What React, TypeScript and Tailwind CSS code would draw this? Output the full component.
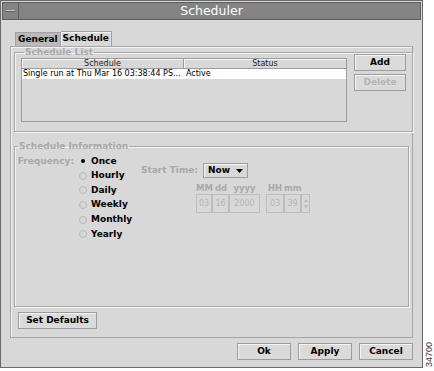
import React from "react";

const F = { fontFamily: '"DejaVu Sans", "Liberation Sans", sans-serif' };

function Btn({ label, w, disabled }: { label: string; w: string; disabled?: boolean }) {
  return (
    <div
      className={`${w} h-[17px] flex items-center justify-center border border-[#9c9c9c] shadow-[inset_1px_1px_0_#f4f4f4] bg-[#dadada] text-[9px] font-bold ${disabled ? "text-[#b4b4b4]" : "text-black"}`}
    >
      {label}
    </div>
  );
}

function Radio({ label, on }: { label: string; on?: boolean }) {
  return (
    <div className="h-[14.6px] flex items-center gap-[4px]">
      <div className={`w-[8px] h-[8px] rounded-full flex items-center justify-center ${on ? "" : "border border-[#b8b8b8]"}`}>
        {on && <div className="w-[4px] h-[4px] rounded-full bg-black" />}
      </div>
      <span className="text-[9px] font-bold text-black">{label}</span>
    </div>
  );
}

function Field({ v, w }: { v: string; w: string }) {
  return (
    <div className={`${w} h-[19px] border border-[#bdbdbd] flex items-center justify-center text-[8px] text-[#b6b6b6]`}>
      {v}
    </div>
  );
}

export default function App() {
  return (
    <div className="w-[434px] h-[371px] bg-white flex" style={F}>
      <div className="w-[423px] h-[368px] border border-[#6a6a6a] bg-[#d8d8d8] flex flex-col">
        {/* title bar */}
        <div className="mx-[1px] mt-[1px] h-[18px] bg-[#848484] border border-[#5e5e5e] flex items-center">
          <div className="w-[16px] h-full border-r border-[#5e5e5e] flex items-center justify-center">
            <div className="w-[9px] h-[2px] bg-[#c8c8c8] border-b border-[#5e5e5e]" />
          </div>
          <div className="flex-1 text-center text-white text-[12.5px] pr-[16px]">Scheduler</div>
        </div>

        {/* tabs */}
        <div className="mt-[11px] ml-[14px] flex items-end h-[15px]">
          <div className="h-[14px] px-[2px] bg-[#b9b9b9] border border-[#a2a2a2] border-b-0 flex items-center text-[9px] font-bold text-black">General</div>
          <div className="h-[15px] px-[2px] bg-[#d8d8d8] border border-[#a2a2a2] border-b-0 border-l-0 shadow-[inset_1px_1px_0_#f4f4f4] flex items-center text-[9px] font-bold text-black">Schedule</div>
        </div>

        {/* panel */}
        <div className="ml-[9px] mr-[9px] h-[292px] border border-[#a6a6a6] shadow-[inset_1px_1px_0_#f2f2f2] px-[3px] flex flex-col">
          <fieldset className="h-[85px] border border-[#a8a8a8] shadow-[inset_1px_1px_0_#f4f4f4,1px_1px_0_#f4f4f4] px-[6px] flex">
            <legend className="ml-[3px] px-[1px] text-[9px] font-bold text-[#a8a8a8] leading-[10px]">Schedule List</legend>
            <div className="mt-[1px] w-[326px] h-[64px] border border-[#9c9c9c] flex flex-col">
              <div className="h-[10px] flex text-[8px] text-[#222] leading-[9px] border-b border-[#9c9c9c]">
                <div className="w-[162px] text-center border-r border-[#9c9c9c] shadow-[inset_1px_1px_0_#f4f4f4]">Schedule</div>
                <div className="flex-1 text-center shadow-[inset_1px_1px_0_#f4f4f4]">Status</div>
              </div>
              <div className="h-[10px] flex bg-white text-[8px] text-black leading-[10px]">
                <div className="w-[162px] pl-[1px] whitespace-nowrap overflow-hidden">Single run at Thu Mar 16 03:38:44 PS...</div>
                <div className="flex-1 pl-[2px]">Active</div>
              </div>
            </div>
            <div className="ml-[7px] mt-[-3px] flex flex-col gap-[3px]">
              <Btn label="Add" w="w-[52px]" />
              <Btn label="Delete" w="w-[52px]" disabled />
            </div>
          </fieldset>

          <fieldset className="mt-[9px] h-[166px] pt-[3px] border border-[#a8a8a8] shadow-[inset_1px_1px_0_#f4f4f4,1px_1px_0_#f4f4f4] flex">
            <legend className="ml-[3px] px-[1px] text-[9px] font-bold text-[#a8a8a8] leading-[10px]">Schedule Information</legend>
            <div className="w-[59px] text-right text-[9px] font-bold text-[#a8a8a8] leading-[14.6px]">Frequency:</div>
            <div className="ml-[5px] w-[58px] flex flex-col">
              <Radio label="Once" on />
              <Radio label="Hourly" />
              <Radio label="Daily" />
              <Radio label="Weekly" />
              <Radio label="Monthly" />
              <Radio label="Yearly" />
            </div>
            <div className="ml-[4px] flex flex-col">
              <div className="mt-[9px] flex items-center gap-[5px]">
                <span className="text-[9px] font-bold text-[#a8a8a8]">Start Time:</span>
                <div className="w-[45px] h-[15px] border border-[#9c9c9c] shadow-[inset_1px_1px_0_#f4f4f4] flex items-center justify-between px-[4px]">
                  <span className="text-[9px] font-bold text-black">Now</span>
                  <svg width="7" height="4" viewBox="0 0 7 4"><path d="M0 0h7L3.5 4z" fill="#000" /></svg>
                </div>
              </div>
              <div className="ml-[55px] mt-[5px] flex">
                <div className="flex flex-col">
                  <div className="flex text-[8.5px] font-bold text-[#a8a8a8] h-[11px] leading-[11px]">
                    <span className="w-[17px] text-center">MM</span>
                    <span className="w-[16px] text-center">dd</span>
                    <span className="w-[31px] text-center">yyyy</span>
                  </div>
                  <div className="flex">
                    <Field v="03" w="w-[16px]" />
                    <Field v="16" w="w-[17px]" />
                    <Field v="2000" w="w-[31px]" />
                  </div>
                </div>
                <div className="ml-[6px] flex flex-col">
                  <div className="flex text-[8.5px] font-bold text-[#a8a8a8] h-[11px] leading-[11px]">
                    <span className="w-[18px] text-center">HH</span>
                    <span className="w-[17px] text-center">mm</span>
                  </div>
                  <div className="flex">
                    <Field v="03" w="w-[18px]" />
                    <Field v="39" w="w-[17px]" />
                    <div className="w-[9px] h-[19px] border border-[#bdbdbd] flex flex-col items-center justify-center gap-[3px]">
                      <svg width="4" height="3" viewBox="0 0 4 3"><path d="M2 0L4 3H0z" fill="#b8b8b8" /></svg>
                      <svg width="4" height="3" viewBox="0 0 4 3"><path d="M0 0h4L2 3z" fill="#b8b8b8" /></svg>
                    </div>
                  </div>
                </div>
              </div>
            </div>
          </fieldset>

          <div className="mt-[5px] ml-[4px]">
            <Btn label="Set Defaults" w="w-[79px]" />
          </div>
        </div>

        {/* bottom buttons */}
        <div className="mt-[5px] mr-[9px] flex justify-end gap-[7px]">
          <Btn label="Ok" w="w-[54px]" />
          <Btn label="Apply" w="w-[54px]" />
          <Btn label="Cancel" w="w-[54px]" />
        </div>
      </div>
      <div className="flex-1 flex items-end justify-center pb-[4px]">
        <span className="[writing-mode:vertical-rl] rotate-180 text-[9px] text-[#333]" style={{ fontFamily: '"Liberation Sans", sans-serif' }}>34700</span>
      </div>
    </div>
  );
}
